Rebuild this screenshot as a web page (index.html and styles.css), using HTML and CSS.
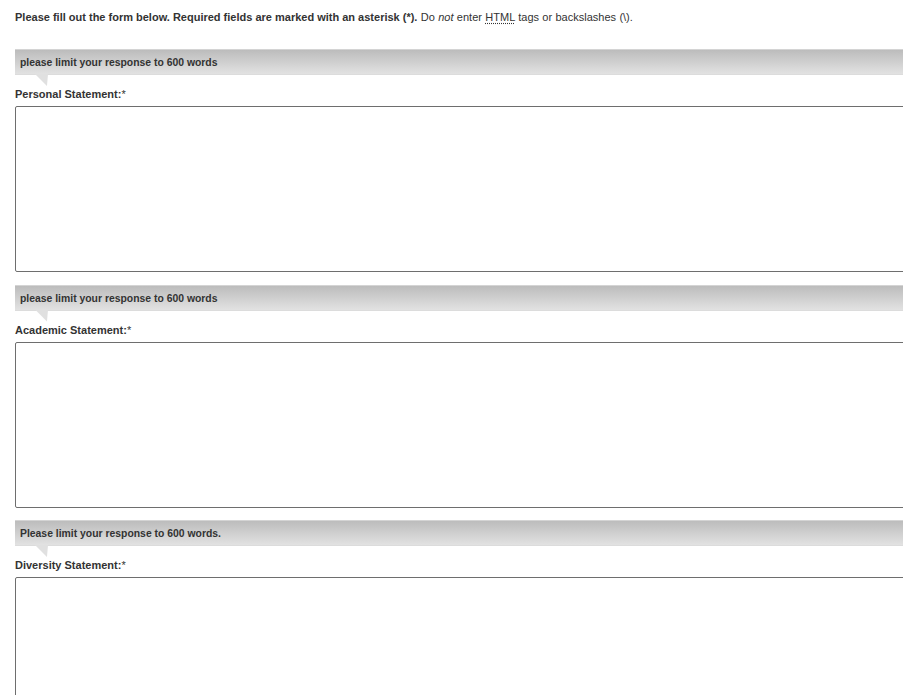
FILE: index.html
```html
<!DOCTYPE html>
<html lang="en">
<head>
<meta charset="utf-8">
<title>Statements</title>
<link rel="stylesheet" href="styles.css">
</head>
<body>
<div class="page">
  <p class="intro"><strong>Please fill out the form below. Required fields are marked with an asterisk (*).</strong> Do <em>not</em> enter <abbr title="HyperText Markup Language">HTML</abbr> tags or backslashes (\).</p>

  <div class="section">
    <div class="note">please limit your response to 600 words<span class="tail"></span></div>
    <label class="label" for="ps">Personal Statement:<span class="req">*</span></label>
    <textarea id="ps" class="field"></textarea>
  </div>

  <div class="section">
    <div class="note">please limit your response to 600 words<span class="tail"></span></div>
    <label class="label" for="as">Academic Statement:<span class="req">*</span></label>
    <textarea id="as" class="field"></textarea>
  </div>

  <div class="section">
    <div class="note">Please limit your response to 600 words.<span class="tail"></span></div>
    <label class="label" for="ds">Diversity Statement:<span class="req">*</span></label>
    <textarea id="ds" class="field"></textarea>
  </div>
</div>
</body>
</html>
```

FILE: styles.css
```css
html {
  overflow: hidden;
}
body {
  margin: 0;
  background: #fff;
  color: #333;
  font-family: "Liberation Sans", Arial, sans-serif;
  font-size: 11px;
}
.page {
  padding: 10px 0 0 15px;
  width: 920px;
}
.intro {
  margin: 0 0 25px;
  line-height: 14px;
  font-size: 11px;
  word-spacing: 0.3px;
}
.intro strong {
  font-weight: bold;
  word-spacing: 0;
}
.intro abbr {
  text-decoration: underline dotted;
  text-underline-offset: 2px;
}
.section {
  display: flex;
  flex-direction: column;
  margin-bottom: 12.5px;
}
.note {
  position: relative;
  height: 23px;
  padding-top: 1px;
  line-height: 24px;
  padding-left: 5px;
  font-size: 10.4px;
  font-weight: bold;
  color: #333;
  border-top: 1px solid #d4d4d4;
  border-bottom: 1px solid #dcdcdc;
  background: linear-gradient(to bottom, #bcbcbc 0%, #cfcfcf 50%, #e2e2e2 100%);
}
.tail {
  position: absolute;
  left: 20px;
  top: 24px;
  width: 13px;
  height: 12px;
  background: #e0e0e0;
  clip-path: polygon(0 0, 100% 0, 92% 100%);
}
.label {
  margin-top: 12px;
  line-height: 14px;
  font-weight: bold;
  color: #333;
}
.req {
  font-weight: normal;
}
.field {
  margin-top: 5px;
  box-sizing: border-box;
  width: 900px;
  height: 166px;
  border: 1px solid #6e6e6e;
  border-radius: 2px;
  padding: 2px;
  background: #fff;
  resize: none;
  font-family: "Liberation Sans", Arial, sans-serif;
  font-size: 12px;
}
```
